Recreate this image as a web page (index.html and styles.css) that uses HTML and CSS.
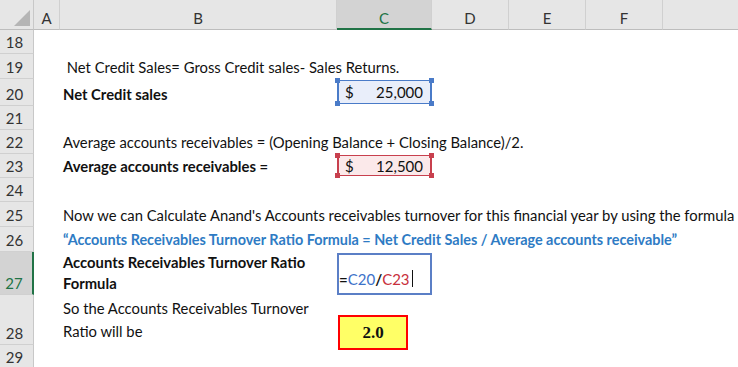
FILE: index.html
```html
<!DOCTYPE html>
<html>
<head>
<meta charset="utf-8">
<link rel="stylesheet" href="styles.css">
</head>
<body>
<div class="sheet">
  <div class="corner"><span class="tri"></span></div>
  <div class="ch">A</div>
  <div class="ch">B</div>
  <div class="ch ch-sel">C</div>
  <div class="ch">D</div>
  <div class="ch">E</div>
  <div class="ch">F</div>
  <div class="ch ch-last"></div>

  <div class="rh r18">18</div>
  <div class="row r18"></div>

  <div class="rh r19">19</div>
  <div class="row r19"><div class="txt b-col">&nbsp;Net Credit Sales= Gross Credit sales- Sales Returns.</div></div>

  <div class="rh r20">20</div>
  <div class="row r20">
    <div class="txt b-col bold">Net Credit sales</div>
    <div class="valbox blue"><span>$</span><span>25,000</span>
      <i class="h tl"></i><i class="h tr"></i><i class="h bl"></i><i class="h br"></i></div>
  </div>

  <div class="rh r21">21</div>
  <div class="row r21"></div>

  <div class="rh r22">22</div>
  <div class="row r22"><div class="txt b-col">Average accounts receivables = (Opening Balance + Closing Balance)/2.</div></div>

  <div class="rh r23">23</div>
  <div class="row r23">
    <div class="txt b-col bold">Average accounts receivables =</div>
    <div class="valbox red"><span>$</span><span>12,500</span>
      <i class="h tl"></i><i class="h tr"></i><i class="h bl"></i><i class="h br"></i></div>
  </div>

  <div class="rh r24">24</div>
  <div class="row r24"></div>

  <div class="rh r25">25</div>
  <div class="row r25"><div class="txt b-col">Now we can Calculate Anand's Accounts receivables turnover for this financial year by using the formula</div></div>

  <div class="rh r26">26</div>
  <div class="row r26"><div class="txt b-col bold quote">“Accounts Receivables Turnover Ratio Formula = Net Credit Sales / Average accounts receivable”</div></div>

  <div class="rh r27 rh-sel">27</div>
  <div class="row r27">
    <div class="txt b-col bold two t27">Accounts Receivables Turnover Ratio<br>Formula</div>
    <div class="editbox"><span class="k">=</span><span class="cb">C20</span><span class="k">/</span><span class="cr">C23</span><span class="caret"></span></div>
  </div>

  <div class="rh r28">28</div>
  <div class="row r28">
    <div class="txt b-col two">So the Accounts Receivables Turnover<br>Ratio will be</div>
    <div class="result">2.0</div>
  </div>

  <div class="rh r29">29</div>
  <div class="row r29"></div>
</div>
</body>
</html>
```

FILE: styles.css
```css
html, body {
  margin: 0;
  padding: 0;
  background: #ffffff;
}
body {
  width: 738px;
  height: 367px;
  overflow: hidden;
  font-family: Lato, "Open Sans", sans-serif;
  color: #111;
}
.sheet {
  display: grid;
  grid-template-columns: 34px 26px 277px 95px 77px 77px 77px 75px;
  grid-template-rows: 30px 24px 25px 27px 24px 24px 24px 24px 25px 25px 43px 50px 24px;
}
.corner {
  background: #e6e6e6;
  border-right: 1px solid #c8c8c8;
  border-bottom: 1px solid #bdbdbd;
  position: relative;
  box-sizing: border-box;
}
.tri {
  position: absolute;
  right: 3px;
  bottom: 3px;
  width: 0;
  height: 0;
  border-left: 16px solid transparent;
  border-bottom: 16px solid #b5b5b5;
}
.ch {
  background: #e6e6e6;
  border-right: 1px solid #d0d0d0;
  border-bottom: 1px solid #bdbdbd;
  box-sizing: border-box;
  display: flex;
  align-items: center;
  justify-content: center;
  font-size: 15px;
  color: #333;
  padding-top: 7px;
}
.ch-sel {
  background: #d3d3d3;
  color: #217346;
  border-bottom: 2px solid #217346;
}
.ch-last { border-right: none; }
.rh {
  grid-column: 1;
  background: #e6e6e6;
  border-right: 1px solid #c8c8c8;
  border-bottom: 1px solid #d0d0d0;
  box-sizing: border-box;
  display: flex;
  align-items: flex-end;
  justify-content: center;
  font-size: 15px;
  color: #333;
  padding-bottom: 2px;
  padding-right: 4px;
}
.rh-sel {
  background: #d3d3d3;
  color: #217346;
  border-right: 2px solid #217346;
}
.row {
  grid-column: 2 / 9;
  display: grid;
  grid-template-columns: 26px 277px 95px 1fr;
  position: relative;
}
.txt {
  grid-column: 2;
  align-self: end;
  white-space: nowrap;
  font-size: 14.8px;
  line-height: 18px;
  padding-left: 3px;
  padding-bottom: 3px;
}
.bold { font-weight: 700; }
.quote { color: #2e7bc4; font-size: 14.4px; }
.two { line-height: 23px; padding-bottom: 2px; }
.t27 { line-height: 21px; padding-bottom: 2px; }
.valbox {
  grid-column: 3;
  align-self: stretch;
  margin: 1px 0 2px 0;
  border-style: solid;
  border-width: 1px 2px;
  display: flex;
  justify-content: space-between;
  align-items: center;
  padding: 0 7px 0 6px;
  font-size: 15px;
  position: relative;
}
.valbox.blue { border-color: #4a7bc8; background: #e9eefa; }
.valbox.red { border-color: #c8404e; background: #fbe9ea; }
.h {
  position: absolute;
  width: 5px;
  height: 5px;
}
.blue .h { background: #4a7bc8; }
.red .h { background: #c8404e; }
.h.tl { left: -4px; top: -3px; }
.h.tr { right: -4px; top: -3px; }
.h.bl { left: -4px; bottom: -3px; }
.h.br { right: -4px; bottom: -3px; }
.editbox {
  grid-column: 3;
  align-self: stretch;
  border: 2px solid #5b7fc6;
  margin: 1px 0 1px 0;
  display: flex;
  align-items: flex-end;
  padding: 0 0 6px 0;
  font-size: 15px;
  line-height: 16px;
}
.k { color: #111; font-weight: 700; }
.cb { color: #3d72c9; }
.cr { color: #c8303c; }
.caret {
  display: inline-block;
  width: 1px;
  height: 17px;
  background: #111;
  margin-left: 2px;
}
.result {
  grid-column: 3;
  align-self: end;
  justify-self: start;
  width: 66px;
  height: 31px;
  margin-left: 1px;
  margin-bottom: -5px;
  border: 2px solid #ff0000;
  background: #ffff66;
  display: flex;
  align-items: center;
  justify-content: center;
  font-family: "Liberation Serif", serif;
  font-weight: 700;
  font-size: 17px;
  color: #111;
  position: relative;
  z-index: 1;
}
```
